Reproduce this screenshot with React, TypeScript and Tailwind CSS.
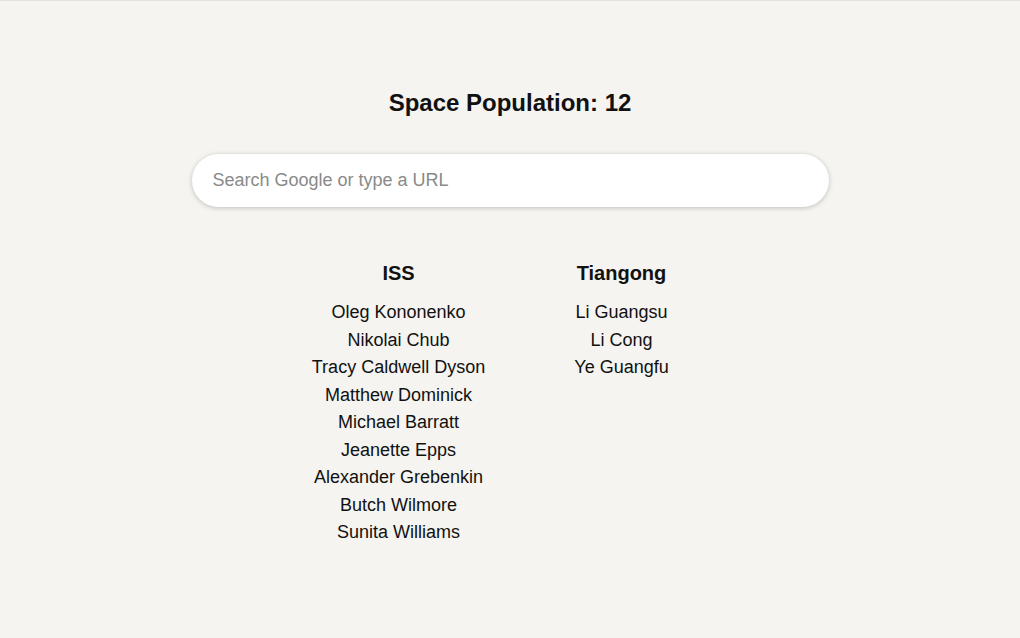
const stations = [
  {
    name: "ISS",
    crew: [
      "Oleg Kononenko",
      "Nikolai Chub",
      "Tracy Caldwell Dyson",
      "Matthew Dominick",
      "Michael Barratt",
      "Jeanette Epps",
      "Alexander Grebenkin",
      "Butch Wilmore",
      "Sunita Williams",
    ],
  },
  {
    name: "Tiangong",
    crew: ["Li Guangsu", "Li Cong", "Ye Guangfu"],
  },
];

export default function App() {
  const total = stations.reduce((n, s) => n + s.crew.length, 0);

  return (
    <div className="min-h-[638px] bg-[#f5f4f0] border-t border-[#e2e1dd] font-['Liberation_Sans',Arial,sans-serif] text-[#111]">
      <div className="flex flex-col items-center pt-[86px]">
        <h1 className="text-[24px] leading-[32px] font-bold">Space Population: {total}</h1>

        <div className="mt-[35px] w-[637px] h-[53px] rounded-full bg-white shadow-[0_1px_5px_rgba(0,0,0,0.22)] flex items-center px-[21px]">
          <input
            type="text"
            placeholder="Search Google or type a URL"
            className="w-full bg-transparent outline-none text-[18px] text-[#222] placeholder:text-[#8a8a8a]"
          />
        </div>

        {/* stations */}
        <div className="mt-[52px] grid grid-cols-2 w-[446px]">
          {stations.map((s) => (
            <div key={s.name} className="flex flex-col items-center">
              <h2 className="text-[20px] leading-[28px] font-bold">{s.name}</h2>
              <ul className="mt-[12px] flex flex-col items-center">
                {s.crew.map((c) => (
                  <li key={c} className="text-[18px] leading-[27.5px]">
                    {c}
                  </li>
                ))}
              </ul>
            </div>
          ))}
        </div>
      </div>
    </div>
  );
}
